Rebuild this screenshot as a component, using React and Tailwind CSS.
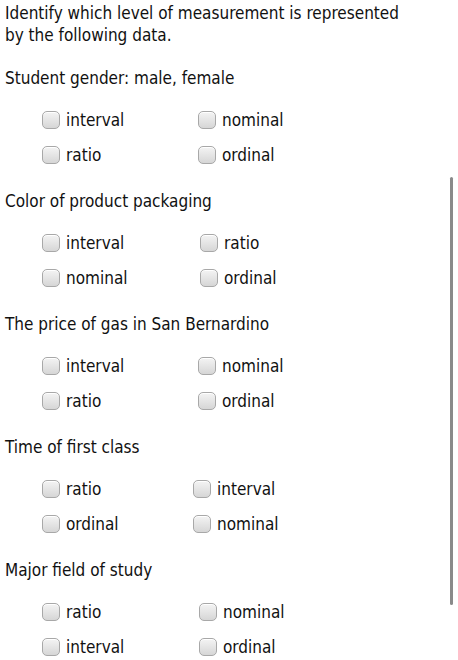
import React from "react";

const groups = [
  { q: "Student gender: male, female", rx: "ml-[156px]", opts: [["interval", "nominal"], ["ratio", "ordinal"]] },
  { q: "Color of product packaging", rx: "ml-[158px]", opts: [["interval", "ratio"], ["nominal", "ordinal"]] },
  { q: "The price of gas in San Bernardino", rx: "ml-[156px]", opts: [["interval", "nominal"], ["ratio", "ordinal"]] },
  { q: "Time of first class", rx: "ml-[151px]", opts: [["ratio", "interval"], ["ordinal", "nominal"]] },
  { q: "Major field of study", rx: "ml-[157px]", opts: [["ratio", "nominal"], ["interval", "ordinal"]] },
];

function Box() {
  return (
    <span className="inline-block w-[18px] h-[18px] rounded-[5px] border border-[#a8a8a8] bg-gradient-to-b from-[#f4f4f4] to-[#d6d6d6] shadow-[inset_0_1px_0_#ffffff] shrink-0" />
  );
}

function Opt({ label }) {
  return (
    <div className="flex items-center gap-[6px] w-[120px]">
      <Box />
      <span>{label}</span>
    </div>
  );
}

export default function App() {
  return (
    <div
      className="relative w-[458px] h-[660px] overflow-hidden bg-white text-[#111] text-[17px] leading-[22px] pl-[5px] pt-[2px]"
      style={{ fontFamily: '"DejaVu Sans Condensed", "DejaVu Sans", sans-serif' }}
    >
      <p>
        Identify which level of measurement is represented
        <br />
        by the following data.
      </p>
      <div className="mt-[21px] flex flex-col gap-[17px]">
        {groups.map((g, i) => (
          <div key={i}>
            <div className="h-[22px]">{g.q}</div>
            <div className="mt-[13px] pl-[37px]">
              {g.opts.map((row, j) => (
                <div key={j} className="h-[35.5px] flex items-center">
                  <div className="w-[0px]">
                    <Opt label={row[0]} />
                  </div>
                  <div className={g.rx}>
                    <Opt label={row[1]} />
                  </div>
                </div>
              ))}
            </div>
          </div>
        ))}
      </div>
      <div className="absolute left-[450px] top-[177px] w-[3px] h-[428px] rounded-full bg-[#8a8a8a]" />
    </div>
  );
}
